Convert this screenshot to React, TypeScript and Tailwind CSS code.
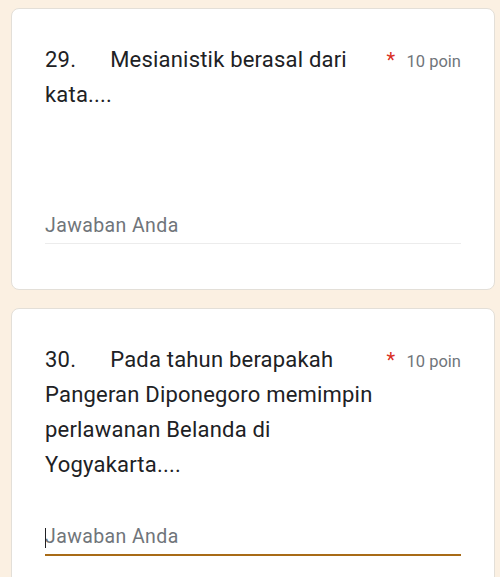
const questions = [
  {
    no: "29.",
    title: "Mesianistik berasal dari kata....",
    points: "10 poin",
    gap: "mt-[102px]",
    focused: false,
  },
  {
    no: "30.",
    title: "Pada tahun berapakah Pangeran Diponegoro memimpin perlawanan Belanda di Yogyakarta....",
    points: "10 poin",
    gap: "mt-[43px]",
    focused: true,
  },
];

function QuestionCard({ q }: { q: (typeof questions)[number] }) {
  return (
    <div className="rounded-[8px] border border-[#e3dfd8] bg-white pl-[33px] pr-[33px] pt-[33px] pb-[45px]">
      <div className="flex items-baseline">
        <p className="flex-1 pr-[6px] text-[22px] leading-[35px] tracking-[0.2px] text-[#202124]">
          {`${q.no}\u2003\u2002${q.title}`}
        </p>
        <span className="text-[20px] leading-[35px] text-[#d93025]">*</span>
        <span className="ml-[10px] w-[56px] text-right text-[16.5px] text-[#70757a] whitespace-nowrap">
          {q.points}
        </span>
      </div>
      <div
        className={
          q.focused
            ? `${q.gap} relative border-b-2 border-[#a86b17] pb-[5px]`
            : `${q.gap} relative border-b border-[#ececec] pb-[5px]`
        }
      >
        {q.focused && <span className="absolute left-0 top-[3px] h-[20px] w-px bg-[#202124]" />}
        <span className="block text-[19.5px] leading-[24px] tracking-[0.4px] text-[#70757a]">
          Jawaban Anda
        </span>
      </div>
    </div>
  );
}

export default function App() {
  return (
    <div
      className="min-h-[577px] bg-[#fbf0e2] pl-[11px] pr-[5px] pt-[8px] flex flex-col gap-[18px]"
      style={{ fontFamily: "Roboto, 'Noto Sans', sans-serif" }}
    >
      {questions.map((q) => (
        <QuestionCard key={q.no} q={q} />
      ))}
    </div>
  );
}
